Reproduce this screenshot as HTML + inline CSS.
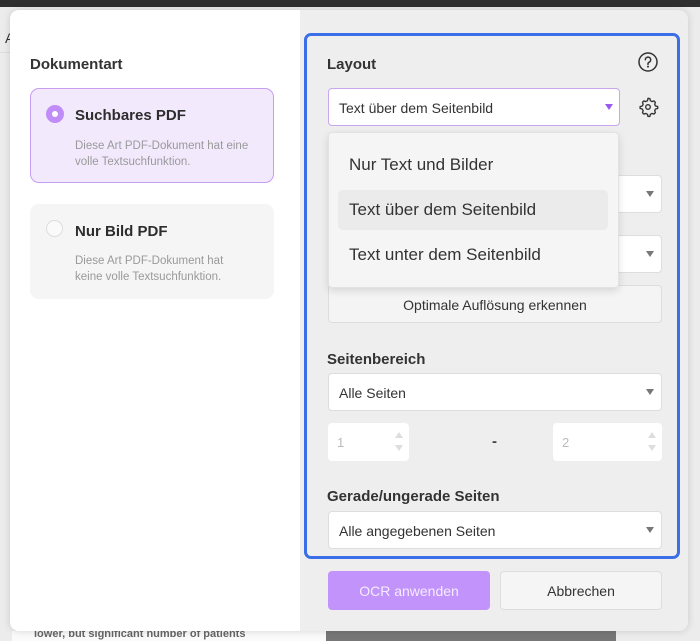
<!DOCTYPE html>
<html><head><meta charset="utf-8"><style>
*{box-sizing:border-box;margin:0;padding:0}
body{width:700px;height:641px;overflow:hidden;background:#ececec;font-family:"Liberation Sans",sans-serif;position:relative;color:#333}
.a{position:absolute}
.top{left:0;top:0;width:700px;height:7px;background:#2f2f2f}
.dlg{left:10px;top:10px;width:678px;height:621px;border-radius:9px;overflow:hidden;background:#eeeeee;box-shadow:0 0 8px rgba(0,0,0,.15)}
.left{left:0;top:0;width:290px;height:621px;background:#fff}
h3{font-size:15px;font-weight:bold;color:#333}
.card{border-radius:9px;width:244px;height:95px}
.ct{font-size:15px;font-weight:bold;color:#2d2d2d}
.cd{font-size:11.5px;color:#999;line-height:16px}
.sel{background:#fff;border:1px solid #ddd;border-radius:4px;height:38px;font-size:14px;color:#333;padding-left:10px;line-height:38px}
.arr{position:absolute;right:7px;top:15px;width:0;height:0;border-left:4px solid transparent;border-right:4px solid transparent;border-top:6px solid #777}
.spin{background:#fff;border-radius:4px;height:38px;font-size:13px;color:#bbb;padding-left:9px;line-height:40px}
.up,.dn{position:absolute;right:6px;width:0;height:0;border-left:4px solid transparent;border-right:4px solid transparent}
.up{top:9px;border-bottom:6px solid #ddd}.dn{top:22px;border-top:6px solid #ddd}
</style></head><body>
<div class="a top"></div>
<div class="a" style="left:0;top:30px;width:10px;height:22px;font-size:14px;color:#333;padding-left:5px">A</div>
<div class="a" style="left:0;top:52px;width:10px;height:1px;background:#ddd"></div>
<div class="a" style="left:12px;top:631px;width:315px;height:10px;background:#fafafa;font-size:11px;font-weight:bold;color:#666;padding-left:22px;line-height:7px;overflow:hidden">lower, but significant number of patients</div>
<div class="a" style="left:326px;top:631px;width:290px;height:10px;background:#777"></div>
<div class="a dlg">
  <div class="a left">
    <h3 class="a" style="left:20px;top:46px">Dokumentart</h3>
    <div class="a card" style="left:20px;top:78px;background:#f3e9fd;border:1px solid #c79df2">
      <div class="a" style="left:15px;top:16px;width:18px;height:18px;border-radius:50%;background:#c08df8"><div class="a" style="left:6px;top:6px;width:6px;height:6px;border-radius:50%;background:#fff"></div></div>
      <div class="a ct" style="left:44px;top:18px">Suchbares PDF</div>
      <div class="a cd" style="left:44px;top:49px">Diese Art PDF-Dokument hat eine<br>volle Textsuchfunktion.</div>
    </div>
    <div class="a card" style="left:20px;top:194px;background:#f5f5f5">
      <div class="a" style="left:16px;top:16px;width:17px;height:17px;border-radius:50%;border:1px solid #ddd;background:#fafafa"></div>
      <div class="a ct" style="left:45px;top:19px">Nur Bild PDF</div>
      <div class="a cd" style="left:45px;top:49px">Diese Art PDF-Dokument hat<br>keine volle Textsuchfunktion.</div>
    </div>
  </div>
  <div class="a" style="left:294px;top:23px;width:376px;height:526px;border:3px solid #3b6fe8;border-radius:7px"></div>
  <h3 class="a" style="left:317px;top:46px">Layout</h3>
  <svg class="a" style="left:627px;top:41px" width="22" height="22" viewBox="0 0 22 22"><circle cx="11" cy="11" r="9" fill="none" stroke="#333" stroke-width="1.5"/><path d="M8.3 8.8a2.7 2.7 0 1 1 3.7 2.5c-.7.3-1 .8-1 1.5v.6" fill="none" stroke="#333" stroke-width="1.5" stroke-linecap="round"/><circle cx="11" cy="15.6" r="1" fill="#333"/></svg>
  <svg class="a" style="left:627px;top:86px" width="22" height="22" viewBox="0 0 24 24"><path d="M12 2.5l2 .3.6 2.3 1.7 1 2.3-.7 1.4 1.5-.7 2.3 1 1.7 2.3.6v2.1l-2.3.6-1 1.7.7 2.3-1.4 1.5-2.3-.7-1.7 1-.6 2.3h-2l-.6-2.3-1.7-1-2.3.7-1.4-1.5.7-2.3-1-1.7-2.3-.6v-2.1l2.3-.6 1-1.7-.7-2.3 1.4-1.5 2.3.7 1.7-1 .6-2.3z" fill="none" stroke="#333" stroke-width="1.5" stroke-linejoin="round"/><circle cx="12" cy="12" r="2.5" fill="none" stroke="#333" stroke-width="1.5"/></svg>
  <div class="a sel" style="left:318px;top:165px;width:334px"><div class="arr"></div></div>
  <div class="a sel" style="left:318px;top:225px;width:334px"><div class="arr"></div></div>
  <div class="a sel" style="left:318px;top:275px;width:334px;background:#f4f4f4;text-align:center;padding-left:0">Optimale Auflösung erkennen</div>
  <div class="a sel" style="left:318px;top:78px;width:292px;border-color:#c9a6ef">Text über dem Seitenbild<div class="arr" style="border-top-color:#9b59f0;right:6px"></div></div>
  <div class="a" style="left:318px;top:122px;width:291px;height:156px;background:#f5f5f5;border:1px solid #e2e2e2;border-radius:4px;box-shadow:0 3px 8px rgba(0,0,0,.12);font-size:17px;color:#333">
    <div class="a" style="left:20px;top:22px">Nur Text und Bilder</div>
    <div class="a" style="left:9px;top:57px;width:270px;height:40px;background:#ebebeb;border-radius:5px"></div>
    <div class="a" style="left:20px;top:67px">Text über dem Seitenbild</div>
    <div class="a" style="left:20px;top:112px">Text unter dem Seitenbild</div>
  </div>
  <h3 class="a" style="left:317px;top:341px">Seitenbereich</h3>
  <div class="a sel" style="left:318px;top:363px;width:334px">Alle Seiten<div class="arr"></div></div>
  <div class="a spin" style="left:318px;top:413px;width:81px">1<div class="up"></div><div class="dn"></div></div>
  <div class="a" style="left:482px;top:423px;font-size:15px;font-weight:bold;color:#444">-</div>
  <div class="a spin" style="left:543px;top:413px;width:109px">2<div class="up"></div><div class="dn"></div></div>
  <h3 class="a" style="left:317px;top:478px">Gerade/ungerade Seiten</h3>
  <div class="a sel" style="left:318px;top:501px;width:334px">Alle angegebenen Seiten<div class="arr"></div></div>
  <div class="a" style="left:318px;top:561px;width:162px;height:39px;border-radius:4px;background:#c293fb;color:#f4ecff;font-size:14px;text-align:center;line-height:41px">OCR anwenden</div>
  <div class="a" style="left:490px;top:561px;width:162px;height:39px;border-radius:4px;background:#f5f5f5;border:1px solid #ddd;color:#333;font-size:14px;text-align:center;line-height:39px">Abbrechen</div>
</div>
</body></html>
